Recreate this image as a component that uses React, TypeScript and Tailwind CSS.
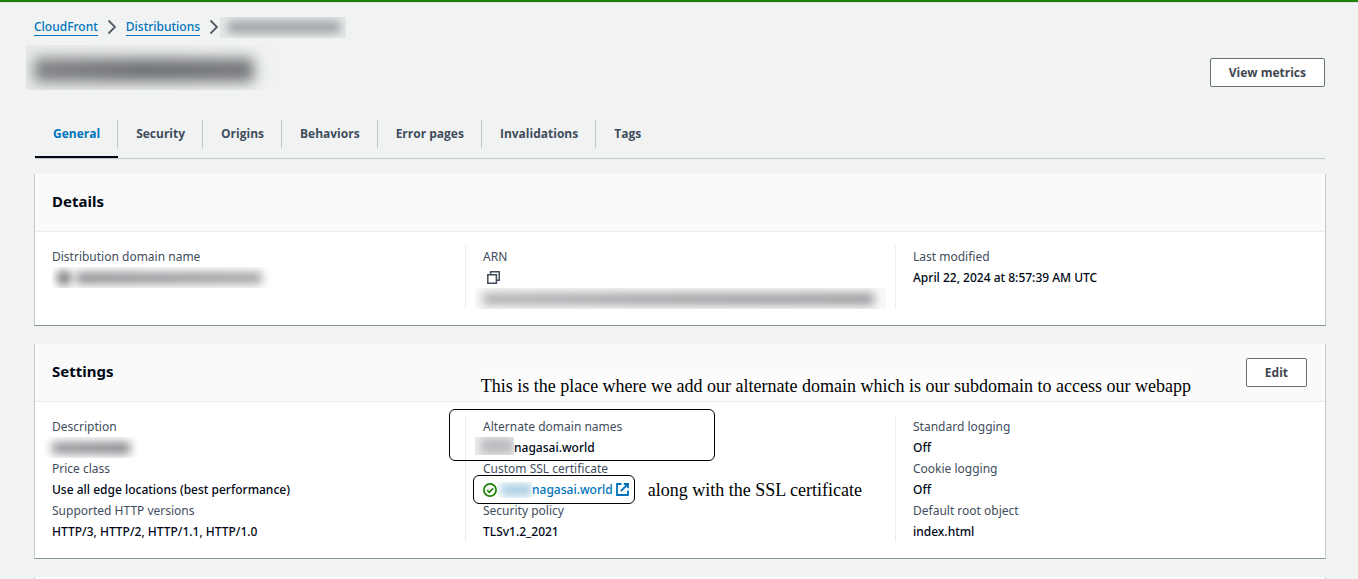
import type { ReactNode } from "react";
import clsx from "clsx";

const tabs = [
  "General",
  "Security",
  "Origins",
  "Behaviors",
  "Error pages",
  "Invalidations",
  "Tags",
];

function Chevron() {
  return (
    <svg className="h-4 w-3 text-[#545b64]" viewBox="0 0 12 16" fill="none" aria-hidden="true">
      <path d="M2.5 1.5l6.5 6.5-6.5 6.5" stroke="currentColor" strokeWidth="1.8" />
    </svg>
  );
}

function CopyIcon() {
  return (
    <svg className="h-[13px] w-[13px]" viewBox="0 0 13 13" fill="none" aria-hidden="true">
      <path d="M0.8 3.7h8.6v8.5H0.8z" stroke="currentColor" strokeWidth="1.5" />
      <path d="M3.6 3.5V0.8h8.6v8.5H9.6" stroke="currentColor" strokeWidth="1.5" />
    </svg>
  );
}

function SuccessIcon() {
  return (
    <svg className="h-[14px] w-[14px] text-[#1d8102]" viewBox="0 0 14 14" fill="none" aria-hidden="true">
      <circle cx="7" cy="7" r="6.1" stroke="currentColor" strokeWidth="1.7" />
      <path d="M4 7l2.3 2.3L10.2 5.2" stroke="currentColor" strokeWidth="1.6" />
    </svg>
  );
}

function ExternalIcon() {
  return (
    <svg className="h-[13px] w-[13px]" viewBox="0 0 13 13" fill="none" aria-hidden="true">
      <path d="M5.5 1H1v11h11V7.5" stroke="currentColor" strokeWidth="1.8" />
      <path d="M7.8 1H12v4.3M12 1L4.8 8.2" stroke="currentColor" strokeWidth="1.8" />
    </svg>
  );
}

// Private values are shown as a blurred smudge with a hard clipped edge.
function Redacted({ className, bars }: { className: string; bars: string[] }) {
  return (
    <span className={clsx("flex shrink-0 items-center overflow-hidden", className)} aria-hidden="true">
      {bars.map((bar, i) => (
        <span key={i} className={bar} />
      ))}
    </span>
  );
}

function Button({ children }: { children: ReactNode }) {
  return (
    <button
      type="button"
      className="h-[29px] rounded-xs border border-[#687078] bg-white px-[18px] font-['Open_Sans',sans-serif] text-[12px] font-bold leading-5 text-[#414750]"
    >
      {children}
    </button>
  );
}

function Card({ title, action, children }: { title?: string; action?: ReactNode; children?: ReactNode }) {
  return (
    <section className="border-x border-b border-x-[#c4cbcb] border-b-[#879596] bg-white">
      <header className="flex h-[58px] items-center justify-between border-b border-[#eaeded] bg-[#fafafa] pl-[17px] pr-[18px]">
        {title && <h2 className="pb-1 text-[15px] font-bold leading-5 text-[#000716]">{title}</h2>}
        {action}
      </header>
      <div className="grid grid-cols-3 pb-4 pt-[14px]">{children}</div>
    </section>
  );
}

function Column({ children, divided }: { children: ReactNode; divided?: boolean }) {
  return (
    <dl className={clsx("min-w-0 px-[17px] text-[12px] leading-[21px]", divided && "border-l border-[#eaeded]")}>
      {children}
    </dl>
  );
}

function Field({ label, children }: { label: string; children: ReactNode }) {
  return (
    <div>
      <dt className="text-[#414d5c]">{label}</dt>
      <dd className="font-medium text-[#000716]">{children}</dd>
    </div>
  );
}

export default function App() {
  return (
    <div className="border-t-2 border-[#1d8102] font-['Noto_Sans',sans-serif] text-[12px]">
      <div className="h-screen overflow-hidden border-t border-[#dfe3e3] bg-[#f1f3f3] pl-[34px] pr-8">
        <nav aria-label="Breadcrumb" className="mt-3.5 flex h-5 items-center gap-2 font-medium">
          <a href="#cloudfront" className="border-b border-[#0073bb] leading-4 text-[#0073bb]">
            CloudFront
          </a>
          <Chevron />
          <a href="#distributions" className="border-b border-[#0073bb] leading-4 text-[#0073bb]">
            Distributions
          </a>
          <Chevron />
          <Redacted
            className="-ml-2 h-[21px] w-[126px] bg-[#e6e9e9]"
            bars={["ml-2 h-3 w-[112px] bg-[#9da2a5] blur-[5px]"]}
          />
        </nav>

        <div className="mt-2 flex items-center justify-between pr-px">
          <h1 className="-ml-2" aria-label="Distribution">
            <Redacted
              className="h-[45px] w-[270px] bg-linear-to-r from-[#e9ebeb] to-[#f1f3f3] pl-2 pt-1"
              bars={["h-6 w-[220px] bg-linear-to-r from-[#808285] via-[#6e7073] to-[#76787b] blur-[7px]"]}
            />
          </h1>
          <div className="pt-2.5">
            <Button>View metrics</Button>
          </div>
        </div>

        <div role="tablist" className="ml-px mr-px mt-5 flex h-[49px] border-b border-[#c2c9c9]">
          {tabs.map((tab, i) => (
            <div key={tab} className="flex">
              {i > 0 && <span className="-ml-px mt-2.5 h-7 w-px bg-[#c2c9c9]" />}
              <button
                type="button"
                role="tab"
                aria-selected={i === 0}
                className={clsx(
                  "border-b-2 px-[18px] pt-0.5 font-['Open_Sans',sans-serif] text-[12px] font-bold leading-5",
                  i === 0 ? "border-[#000716] text-[#0073bb]" : "border-transparent text-[#414d5c]",
                )}
              >
                {tab}
              </button>
            </div>
          ))}
        </div>

        <main className="mt-[15px] flex flex-col gap-[18px]">
          <Card title="Details">
            <Column>
              <Field label="Distribution domain name">
                <Redacted
                  className="h-[21px] w-[240px]"
                  bars={[
                    "ml-1 h-4 w-4 rounded-full bg-[#85878a] blur-[4px]",
                    "ml-1 h-3 w-[186px] bg-linear-to-r from-[#8f9194] to-[#a2a4a6] blur-[5px]",
                  ]}
                />
              </Field>
            </Column>
            <Column divided>
              <Field label="ARN">
                <button type="button" aria-label="Copy ARN" className="ml-1 flex h-[21px] items-center text-[#414d5c]">
                  <CopyIcon />
                </button>
                <Redacted
                  className="-mx-2 h-[21px] bg-[#f8f8f8]"
                  bars={[
                    "ml-2 mr-3 h-3 flex-1 bg-linear-to-r from-[#b0b2b4] via-[#a0a2a5] to-[#9a9c9f] blur-[5px]",
                  ]}
                />
              </Field>
            </Column>
            <Column divided>
              <Field label="Last modified">April 22, 2024 at 8:57:39 AM UTC</Field>
            </Column>
          </Card>

          <div className="relative">
            <Card title="Settings" action={<Button>Edit</Button>}>
              <Column>
                <Field label="Description">
                  <Redacted
                    className="-ml-2 h-[21px] w-[100px]"
                    bars={["ml-2 h-3 w-[78px] bg-linear-to-r from-[#96989b] to-[#85878a] blur-[5px]"]}
                  />
                </Field>
                <Field label="Price class">Use all edge locations (best performance)</Field>
                <Field label="Supported HTTP versions">HTTP/3, HTTP/2, HTTP/1.1, HTTP/1.0</Field>
              </Column>
              <Column divided>
                <Field label="Alternate domain names">
                  <span className="flex">
                    <Redacted
                      className="-ml-2 h-[18px] w-[39px] bg-[#ededee]"
                      bars={["ml-1.5 h-4 w-8 bg-[#b9bbbd] blur-[4px]"]}
                    />
                    nagasai.world
                  </span>
                </Field>
                <Field label="Custom SSL certificate">
                  <span className="flex items-center">
                    <SuccessIcon />
                    <a href="#certificate" className="flex items-center text-[#0073bb]">
                      <Redacted className="h-4 w-[35px]" bars={["ml-1 h-3 w-8 bg-[#a9cde3] blur-[4px]"]} />
                      <span className="mr-[3px]">nagasai.world</span>
                      <ExternalIcon />
                    </a>
                  </span>
                </Field>
                <Field label="Security policy">TLSv1.2_2021</Field>
              </Column>
              <Column divided>
                <Field label="Standard logging">Off</Field>
                <Field label="Cookie logging">Off</Field>
                <Field label="Default root object">index.html</Field>
              </Column>
            </Card>

            {/* hand-placed notes on top of the card */}
            <div className="pointer-events-none absolute left-1/3 top-0 font-['Liberation_Serif',serif] text-[18px] leading-6 text-black">
              <p className="absolute left-4 top-[30px] whitespace-nowrap bg-[#fcfcfc]">
                This is the place where we add our alternate domain which is our subdomain to access our webapp
              </p>
              <span className="absolute -left-4 top-[65px] h-[52px] w-[266px] rounded-md border border-black" />
              <span className="absolute left-2 top-[131px] h-[29px] w-[162px] rounded-md border border-black" />
              <p className="absolute left-[183px] top-[134px] whitespace-nowrap">along with the SSL certificate</p>
            </div>
          </div>

          <Card />
        </main>
      </div>
    </div>
  );
}
